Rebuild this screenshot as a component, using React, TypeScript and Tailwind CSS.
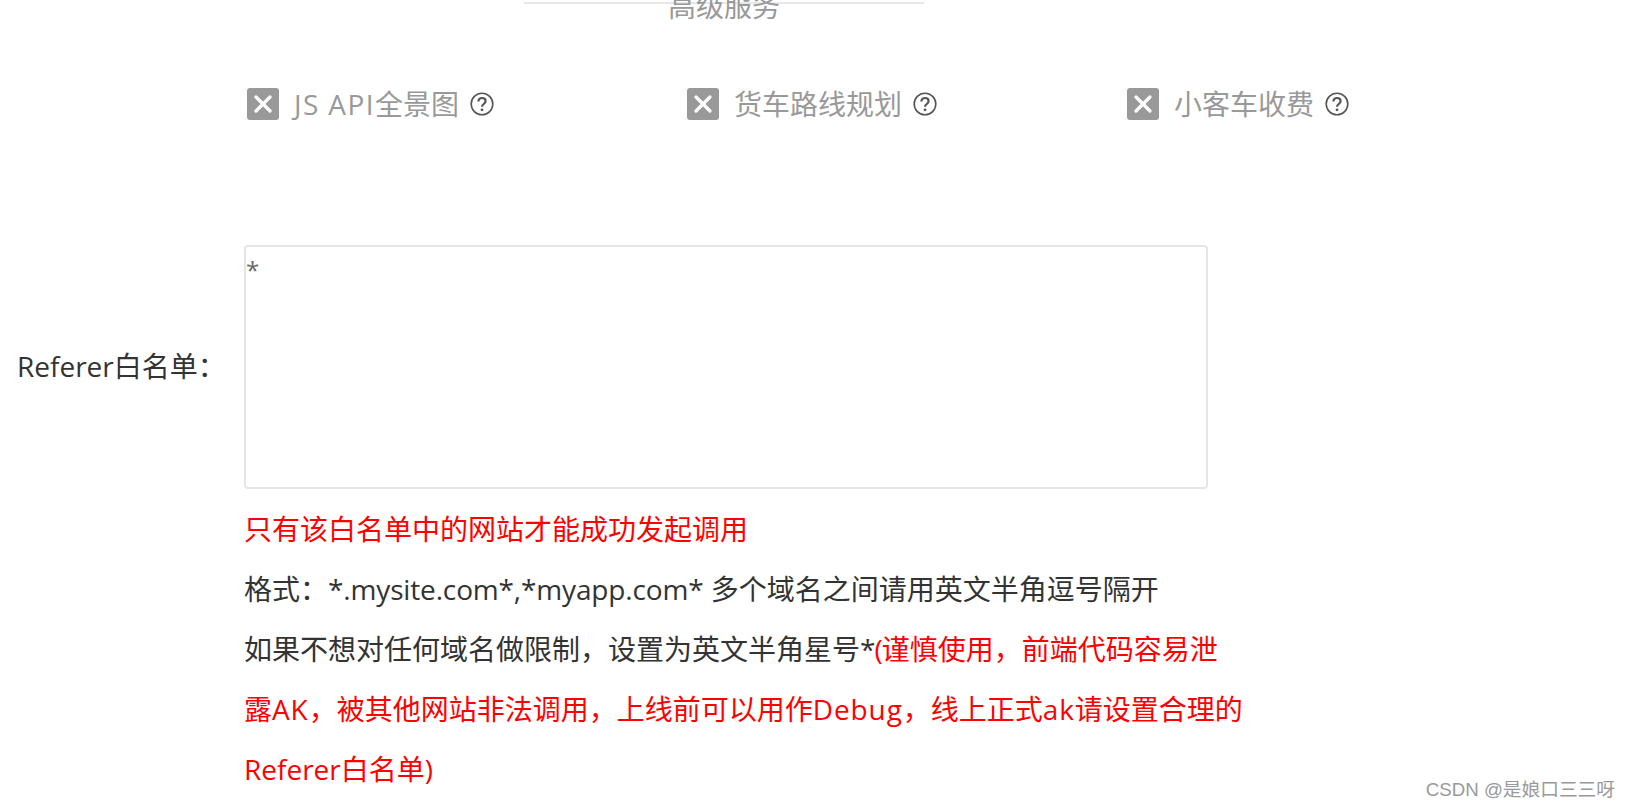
import { X } from 'lucide-react';

const services = [
  { label: 'JS API', rest: '全景图', width: 'w-[440px]' },
  { label: '货车路线规划', rest: '', width: 'w-[440px]' },
  { label: '小客车收费', rest: '', width: 'w-auto' },
];

function HelpIcon() {
  return (
    <svg width="26" height="26" viewBox="0 0 26 26" fill="none" className="ml-[10px] shrink-0">
      <circle cx="13" cy="13" r="10.8" stroke="#555" strokeWidth="1.6" />
      <path d="M9.4 10.4c0-2.2 1.6-3.4 3.6-3.4s3.6 1.2 3.6 3.1c0 2.9-3.6 2.9-3.6 5.7" stroke="#555" strokeWidth="2.2" />
      <circle cx="13" cy="18.8" r="1.4" fill="#555" />
    </svg>
  );
}

function Service({ label, rest, width }: { label: string; rest: string; width: string }) {
  return (
    <div className={`flex items-center ${width}`}>
      <span className="flex h-8 w-8 items-center justify-center rounded-[3px] bg-[#999999]">
        <X size={28} color="#fff" strokeWidth={2.8} />
      </span>
      <span className="ml-[15px] text-[#999999]">
        {rest ? <span className="tracking-[1.4px]">{label}</span> : label}
        {rest}
      </span>
      <HelpIcon />
    </div>
  );
}

export default function App() {
  return (
    <div
      className="h-[810px] w-[1632px] overflow-hidden bg-white text-[28px] text-[#333333]"
      style={{ fontFamily: '"Open Sans", "Noto Sans CJK SC", sans-serif' }}
    >
      <div className="ml-[524px] mt-[2px] w-[400px] border-t-2 border-[#e8e8e8] text-center">
        <div className="-mt-[18px] leading-[40px] text-[#999999]">高级服务</div>
      </div>

      <div className="ml-[247px] mt-[62px] flex h-8 items-center">
        {services.map((s) => (
          <Service key={s.label} label={s.label} rest={s.rest} width={s.width} />
        ))}
      </div>

      <div className="mt-[125px] flex">
        <div className="flex h-[242px] w-[244px] items-center whitespace-nowrap pl-[17px]">
          Referer白名单：
        </div>
        <div className="w-[1000px]">
          <textarea
            readOnly
            defaultValue="*"
            className="block h-[244px] w-[964px] resize-none rounded-[4px] border-2 border-[#e5e5e5] bg-white pl-0 pt-[5px] text-[24px] leading-[36px] text-[#666666] outline-none"
          />
          <div className="mt-[10px] w-[1000px] leading-[60px]">
            <div className="text-[#ff0000]">只有该白名单中的网站才能成功发起调用</div>
            <div>
              格式：<span className="tracking-[-0.15px]">*.mysite.com*,*myapp.com*</span> 多个域名之间请用英文半角逗号隔开
            </div>
            <div>
              如果不想对任何域名做限制，设置为英文半角星号<span className="tracking-[-1px]">*</span>
              <span className="text-[#ff0000]">
                <span className="tracking-[-1px]">(</span>谨慎使用，前端代码容易泄露<span className="tracking-[0.9px]">AK</span>，被其他网站非法调用，上线前可以用作<span className="tracking-[0.9px]">Debug</span>，线上正式<span className="tracking-[0.9px]">ak</span>请设置合理的Referer白名单)
              </span>
            </div>
          </div>
        </div>
      </div>

      <div
        className="-mt-[22px] pr-[17px] text-right text-[18.7px] leading-[26px] text-[#999999]"
        style={{ fontFamily: '"Liberation Sans", "Noto Sans CJK SC", sans-serif' }}
      >
        CSDN @是娘口三三呀
      </div>
    </div>
  );
}
